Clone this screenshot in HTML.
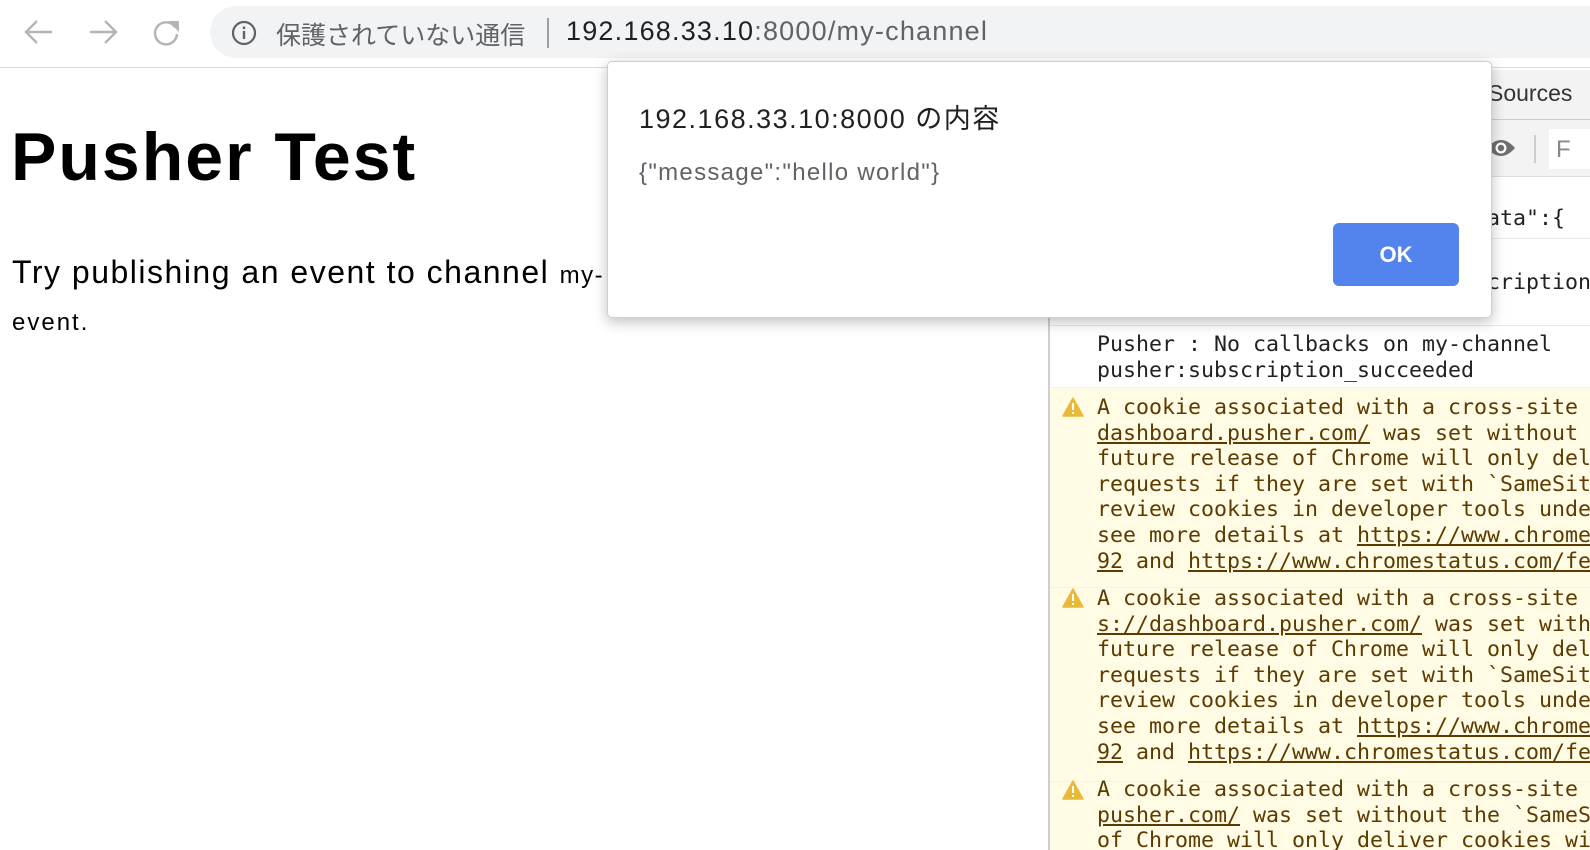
<!DOCTYPE html>
<html style="width:1590px;height:850px;overflow:hidden"><head><meta charset="utf-8"><style>
*{margin:0;padding:0;box-sizing:border-box}
body{width:1590px;height:850px;overflow:hidden;background:#fff;position:relative;font-family:"Liberation Sans","Noto Sans CJK JP",sans-serif}
.abs{position:absolute}
.mono{font-family:"DejaVu Sans Mono","Liberation Mono",monospace;font-size:21.6px;line-height:25.6px;white-space:pre;color:#222}
.warn{background:#fffbe5;border-top:1px solid #fff5c2;color:#5c3b00}
.warn u{color:#555;text-decoration:underline}
.tri{position:absolute;left:12px;width:22px;height:20px}
#dt{position:absolute;left:1048px;top:68px;width:542px;height:782px;overflow:hidden;background:#fff;border-left:2px solid #cfcfcf}
</style></head><body>
<div class="abs" style="left:0;top:0;width:1590px;height:68px;background:#fff;border-bottom:1px solid #dadce0"></div>
<svg class="abs" style="left:22px;top:18px" width="160" height="30" viewBox="0 0 160 30">
<g fill="none" stroke="#b5b5b5" stroke-width="2.4">
<path d="M4 14H30M15 3L4 14L15 25"/>
<path d="M68 14H94M83 3L94 14L83 25"/>
<path d="M153 9A11 11 0 1 0 155 16"/>
</g>
<path d="M146 3L157 3L157 14Z" fill="#b5b5b5"/>
</svg>
<div class="abs" style="left:210px;top:6px;width:1380px;height:52px;background:#f1f3f4;border-radius:26px 0 0 26px"></div>
<svg class="abs" style="left:231px;top:20px" width="26" height="26" viewBox="0 0 26 26"><circle cx="13" cy="13" r="11" fill="none" stroke="#5f6368" stroke-width="2.2"/><rect x="11.8" y="11" width="2.4" height="8" fill="#5f6368"/><rect x="11.8" y="6.5" width="2.4" height="2.6" fill="#5f6368"/></svg>
<div class="abs" style="left:276px;top:16px;font-size:25px;color:#5f6368;white-space:nowrap">保護されていない通信</div>
<div class="abs" style="left:547px;top:18px;width:2px;height:30px;background:#9aa0a6"></div>
<div class="abs" style="left:566px;top:16px;font-size:27px;letter-spacing:1.2px;color:#202124;white-space:nowrap">192.168.33.10<span style="color:#5f6368">:8000/my-channel</span></div>
<div class="abs" style="left:11px;top:118px;font-size:68px;font-weight:bold;color:#000;letter-spacing:2px;white-space:nowrap">Pusher Test</div>
<div class="abs" style="left:12px;top:254px;font-size:32px;letter-spacing:1.5px;color:#000;white-space:nowrap">Try publishing an event to channel <span style="font-size:24px">my-</span></div>
<div class="abs" style="left:12px;top:309px;font-size:24px;letter-spacing:2px;color:#000">event.</div>
<div id="dt">
<div class="abs" style="left:0;top:2px;width:540px;height:50px;background:#f3f3f3;border-bottom:1px solid #ccc"></div>
<div class="abs" style="left:438px;top:12px;font-size:23px;color:#333">Sources</div>
<div class="abs" style="left:0;top:52px;width:540px;height:57px;background:#f3f3f3;border-bottom:1px solid #ddd"></div>
<svg class="abs" style="left:436px;top:69px" width="30" height="22" viewBox="0 0 30 22"><path d="M1 11Q15 -5 29 11Q15 27 1 11Z" fill="#6e6e6e"/><circle cx="15" cy="11" r="5.5" fill="#fff"/><circle cx="15" cy="11" r="3.2" fill="#6e6e6e"/></svg>
<div class="abs" style="left:484px;top:67px;width:2px;height:28px;background:#ccc"></div>
<div class="abs" style="left:499px;top:61px;width:41px;height:40px;background:#fff"></div>
<div class="abs" style="left:506px;top:68px;font-size:24px;color:#888">F</div>
<div class="abs mono" style="left:47px;top:138px">Pusher : Event recd {"evnt","data":{</div>
<div class="abs" style="left:0;top:170px;width:540px;height:1px;background:#e8e8e8"></div>
<div class="abs mono" style="left:47px;top:202px">Pusher : Event recd {"e":"subscription_succeeded</div>
<div class="abs" style="left:0;top:257px;width:540px;height:1px;background:#e8e8e8"></div>
<div class="abs mono" style="left:47px;top:264px">Pusher : No callbacks on my-channel
pusher:subscription_succeeded</div>
<div class="abs warn" style="left:0;top:319px;width:540px;height:200px"></div>
<div class="abs mono" style="left:47px;top:327px;color:#5c3b00">A cookie associated with a cross-site resource at http://
<u>dashboard.pusher.com/</u> was set without the `SameSite` attribute. A
future release of Chrome will only deliver cookies with cross-site
requests if they are set with `SameSite=None` and `Secure`. You can
review cookies in developer tools under Application>Storage>Cookies and
see more details at <u>https://www.chromestatus.com/feature/50885478458</u>
<u>92</u> and <u>https://www.chromestatus.com/feature/5633521622188032</u>.</div>
<div class="abs warn" style="left:0;top:519px;width:540px;height:194px"></div>
<div class="abs mono" style="left:47px;top:518px;color:#5c3b00">A cookie associated with a cross-site resource at http
<u>s://dashboard.pusher.com/</u> was set without the `SameSite` attribute. A
future release of Chrome will only deliver cookies with cross-site
requests if they are set with `SameSite=None` and `Secure`. You can
review cookies in developer tools under Application>Storage>Cookies and
see more details at <u>https://www.chromestatus.com/feature/50885478458</u>
<u>92</u> and <u>https://www.chromestatus.com/feature/5633521622188032</u>.</div>
<div class="abs warn" style="left:0;top:713px;width:540px;height:69px"></div>
<div class="abs mono" style="left:47px;top:709px;color:#5c3b00">A cookie associated with a cross-site resource at http://
<u>pusher.com/</u> was set without the `SameSite` attribute. A future release
of Chrome will only deliver cookies with cross-site</div>
<svg class="tri" style="top:329px" viewBox="0 0 22 20"><path d="M11 1L21 19H1Z" fill="#e9b93a" stroke="#e9b93a" stroke-linejoin="round" stroke-width="1.5"/><rect x="10" y="6" width="2" height="7" fill="#fff"/><rect x="10" y="15" width="2" height="2" fill="#fff"/></svg>
<svg class="tri" style="top:520px" viewBox="0 0 22 20"><path d="M11 1L21 19H1Z" fill="#e9b93a" stroke="#e9b93a" stroke-linejoin="round" stroke-width="1.5"/><rect x="10" y="6" width="2" height="7" fill="#fff"/><rect x="10" y="15" width="2" height="2" fill="#fff"/></svg>
<svg class="tri" style="top:712px" viewBox="0 0 22 20"><path d="M11 1L21 19H1Z" fill="#e9b93a" stroke="#e9b93a" stroke-linejoin="round" stroke-width="1.5"/><rect x="10" y="6" width="2" height="7" fill="#fff"/><rect x="10" y="15" width="2" height="2" fill="#fff"/></svg>
</div>
<div class="abs" style="left:607px;top:61px;width:885px;height:257px;background:#fff;border:1px solid #cfcfcf;border-radius:5px;box-shadow:0 4px 14px rgba(0,0,0,0.25)"></div>
<div class="abs" style="left:639px;top:97px;font-size:27px;letter-spacing:1.5px;color:#202124;white-space:nowrap">192.168.33.10:8000 の内容</div>
<div class="abs" style="left:639px;top:159px;font-size:24px;letter-spacing:1.3px;color:#5f6368;white-space:nowrap">{"message":"hello world"}</div>
<div class="abs" style="left:1333px;top:223px;width:126px;height:63px;background:#5383ec;border-radius:6px;color:#fff;font-size:22px;font-weight:bold;text-align:center;line-height:63px">OK</div>
</body></html>
